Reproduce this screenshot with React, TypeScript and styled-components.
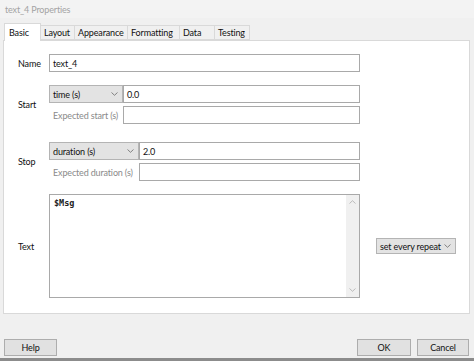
import React from "react";
import styled, { createGlobalStyle } from "styled-components";

const Global = createGlobalStyle`
  html, body { margin: 0; padding: 0; background: #f0f0f0; }
  body {
    font-family: Lato, "Noto Sans", sans-serif;
    font-size: 9px;
    letter-spacing: -0.15px;
    color: #1a1a1a;
  }
  * { box-sizing: border-box; }
`;

const Dialog = styled.div`
  width: 474px;
  height: 361px;
  display: flex;
  flex-direction: column;
  background: #f0f0f0;
  overflow: hidden;
`;

const TitleBar = styled.div`
  height: 18px;
  display: flex;
  align-items: center;
  padding-left: 5px;
  color: #a3a3a3;
  background: #f3f3f3;
`;

const TabStrip = styled.div`
  margin-top: 5px;
  margin-left: 4px;
  height: 17px;
  display: flex;
  align-items: flex-end;
  position: relative;
  z-index: 1;
`;

const Tab = styled.div<{ $w: number; $active?: boolean }>`
  width: ${(p) => p.$w}px;
  height: ${(p) => (p.$active ? 18 : 15)}px;
  margin-bottom: ${(p) => (p.$active ? -1 : 0)}px;
  padding-left: ${(p) => (p.$active ? 4 : 3)}px;
  display: flex;
  align-items: center;
  background: ${(p) => (p.$active ? "#ffffff" : "#f0f0f0")};
  border: 1px solid #d9d9d9;
  border-bottom: ${(p) => (p.$active ? "none" : "1px solid #d9d9d9")};
  border-left-width: ${(p) => (p.$active ? 1 : 0)}px;
  color: #111;
  white-space: nowrap;
`;

const Panel = styled.div`
  margin-left: 3px;
  width: 467px;
  height: 274px;
  background: #ffffff;
  border: 1px solid #d9d9d9;
  padding: 13px 0 0 14px;
  display: flex;
  flex-direction: column;
`;

const Row = styled.div<{ $gap: number }>`
  margin-top: ${(p) => p.$gap}px;
  display: grid;
  grid-template-columns: 31px 311px 96px;
  align-items: center;
`;

const Label = styled.div`
  color: #111;
  white-space: nowrap;
`;

const Group = styled.div<{ $selW: number }>`
  display: grid;
  grid-template-columns: ${(p) => p.$selW}px 1fr;
  row-gap: 3px;
  align-items: center;
`;

const SubLabel = styled.div`
  padding-left: 4px;
  color: #8a8a8a;
  white-space: nowrap;
`;

const Field = styled.div`
  height: 18px;
  border: 1px solid #a9a9a9;
  background: #ffffff;
  padding-left: 3px;
  display: flex;
  align-items: center;
  color: #111;
`;

const Select = styled.div<{ $h?: number }>`
  height: ${(p) => p.$h ?? 18}px;
  border: 1px solid #b4b4b4;
  background: #e3e3e3;
  padding: 0 4px 0 3px;
  display: flex;
  align-items: center;
  justify-content: space-between;
  color: #111;
  white-space: nowrap;
`;

const Chevron = ({ color = "#777" }: { color?: string }) => (
  <svg width="7" height="4" viewBox="0 0 7 4">
    <path d="M0.5 0.5 L3.5 3.3 L6.5 0.5" fill="none" stroke={color} strokeWidth="0.9" />
  </svg>
);

const ChevronUp = ({ color = "#b5b5b5" }: { color?: string }) => (
  <svg width="7" height="4" viewBox="0 0 7 4">
    <path d="M0.5 3.5 L3.5 0.7 L6.5 3.5" fill="none" stroke={color} strokeWidth="0.9" />
  </svg>
);

const TextArea = styled.div`
  height: 104px;
  border: 1px solid #a9a9a9;
  background: #ffffff;
  display: flex;
`;

const TextContent = styled.div`
  flex: 1;
  padding: 3px 4px;
  font-family: "DejaVu Sans Mono", "Liberation Mono", monospace;
  font-weight: bold;
  font-size: 8.5px;
  letter-spacing: 0;
  color: #222;
`;

const ScrollBar = styled.div`
  width: 13px;
  background: #f0f0f0;
  display: flex;
  flex-direction: column;
  justify-content: space-between;
  align-items: center;
  padding: 5px 0 5px;
`;

const RightCell = styled.div`
  padding-left: 16px;
`;

const Footer = styled.div`
  height: 44px;
  display: flex;
  align-items: flex-start;
  justify-content: space-between;
  padding: 25px 5px 0 4px;
`;

const Buttons = styled.div`
  display: flex;
  gap: 6px;
`;

const Button = styled.div<{ $w: number }>`
  width: ${(p) => p.$w}px;
  height: 17px;
  border: 1px solid #adadad;
  background: #e1e1e1;
  display: flex;
  align-items: center;
  justify-content: center;
  color: #111;
`;

const BottomEdge = styled.div`
  height: 3px;
  background: #8c8c8c;
`;

const tabs = [
  { label: "Basic", w: 37, active: true },
  { label: "Layout", w: 34 },
  { label: "Appearance", w: 53 },
  { label: "Formatting", w: 52 },
  { label: "Data", w: 35 },
  { label: "Testing", w: 35 },
];

export default function App() {
  return (
    <>
      <Global />
      <Dialog>
        <TitleBar>text_4 Properties</TitleBar>
        <TabStrip>
          {tabs.map((t) => (
            <Tab key={t.label} $w={t.w} $active={t.active}>
              {t.label}
            </Tab>
          ))}
        </TabStrip>
        <Panel>
          <Row $gap={0}>
            <Label>Name</Label>
            <Field>text_4</Field>
          </Row>
          <Row $gap={13}>
            <Label>Start</Label>
            <Group $selW={74}>
              <Select>
                <span>time (s)</span>
                <Chevron />
              </Select>
              <Field>0.0</Field>
              <SubLabel>Expected start (s)</SubLabel>
              <Field />
            </Group>
          </Row>
          <Row $gap={18}>
            <Label>Stop</Label>
            <Group $selW={90}>
              <Select>
                <span>duration (s)</span>
                <Chevron />
              </Select>
              <Field>2.0</Field>
              <SubLabel>Expected duration (s)</SubLabel>
              <Field />
            </Group>
          </Row>
          <Row $gap={13}>
            <Label>Text</Label>
            <TextArea>
              <TextContent>$Msg</TextContent>
              <ScrollBar>
                <ChevronUp />
                <Chevron color="#b5b5b5" />
              </ScrollBar>
            </TextArea>
            <RightCell>
              <Select $h={16}>
                <span>set every repeat</span>
                <Chevron />
              </Select>
            </RightCell>
          </Row>
        </Panel>
        <Footer>
          <Button $w={53}>Help</Button>
          <Buttons>
            <Button $w={54}>OK</Button>
            <Button $w={52}>Cancel</Button>
          </Buttons>
        </Footer>
        <BottomEdge />
      </Dialog>
    </>
  );
}
